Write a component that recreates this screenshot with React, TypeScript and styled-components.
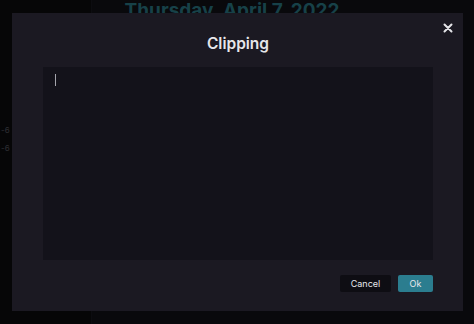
import React from "react";
import styled, { createGlobalStyle } from "styled-components";

const GlobalStyle = createGlobalStyle`
  html, body {
    margin: 0;
    padding: 0;
    background: #0b0b0e;
    font-family: Inter, "Liberation Sans", Arial, sans-serif;
  }
  * { box-sizing: border-box; }
`;

const Page = styled.div`
  position: relative;
  display: flex;
  width: 474px;
  height: 324px;
  overflow: hidden;
  background: #0c0c10;
`;

const Sidebar = styled.aside`
  display: flex;
  flex-direction: column;
  gap: 8px;
  width: 92px;
  padding-top: 125px;
  background: #08080a;
  border-right: 1px solid #111116;
`;

const TickLabel = styled.span`
  font-size: 8px;
  color: #3d3d44;
  padding-left: 1px;
`;

const Main = styled.main`
  flex: 1;
  display: flex;
  justify-content: center;
  padding-right: 102px;
`;

const DateTitle = styled.h1`
  margin: 0;
  margin-top: -1px;
  font-size: 19px;
  font-weight: 700;
  color: #1f5761;
  white-space: nowrap;
`;

const Overlay = styled.div`
  position: absolute;
  inset: 0;
  display: flex;
  align-items: flex-start;
  padding: 13px 11px 13px 12px;
  background: rgba(0, 0, 0, 0.25);
`;

const Modal = styled.div`
  position: relative;
  display: flex;
  flex-direction: column;
  width: 451px;
  height: 298px;
  padding: 21px 30px 18px 31px;
  background: #1b1922;
`;

const CloseBtn = styled.button`
  position: absolute;
  top: 5px;
  right: 5px;
  width: 20px;
  height: 20px;
  display: flex;
  align-items: center;
  justify-content: center;
  padding: 0;
  border: none;
  background: transparent;
  color: #e4e4e8;
  cursor: pointer;
`;

const Title = styled.h2`
  margin: 0 0 13px;
  text-align: center;
  font-size: 15.5px;
  font-weight: 600;
  color: #e6e6ea;
  line-height: 20px;
`;

const EditorWrap = styled.div`
  position: relative;
  width: 390px;
  height: 193px;
`;

const Editor = styled.textarea`
  width: 100%;
  height: 100%;
  resize: none;
  border: none;
  outline: none;
  padding: 7px 12px;
  background: #13121a;
  color: #d0d0d6;
  caret-color: #b8b8c0;
  font-family: inherit;
  font-size: 12px;
  line-height: 14px;
`;

const Caret = styled.span`
  position: absolute;
  top: 7px;
  left: 12px;
  width: 1px;
  height: 12px;
  background: #a4a4ac;
  pointer-events: none;
`;

const Footer = styled.div`
  display: flex;
  justify-content: flex-end;
  gap: 7px;
  margin-top: 15px;
`;

const Button = styled.button<{ $primary?: boolean }>`
  height: 17px;
  width: ${(p) => (p.$primary ? "35px" : "51px")};
  padding: 0;
  border: none;
  border-radius: 2px;
  font-family: inherit;
  font-size: 9px;
  color: #e8e8ec;
  background: ${(p) => (p.$primary ? "#2b7d8f" : "#0e0d13")};
  cursor: pointer;
`;

export default function App() {
  return (
    <>
      <GlobalStyle />
      <Page>
        <Sidebar>
          <TickLabel>-6</TickLabel>
          <TickLabel>-6</TickLabel>
        </Sidebar>
        <Main>
          <DateTitle>Thursday, April 7, 2022</DateTitle>
        </Main>
        <Overlay>
          <Modal>
            <CloseBtn aria-label="Close">
              <svg width="10" height="10" viewBox="0 0 10 10">
                <path d="M1.5 1.5 L8.5 8.5 M8.5 1.5 L1.5 8.5" stroke="currentColor" strokeWidth="2" strokeLinecap="round" />
              </svg>
            </CloseBtn>
            <Title>Clipping</Title>
            <EditorWrap>
              <Editor defaultValue="" />
              <Caret />
            </EditorWrap>
            <Footer>
              <Button>Cancel</Button>
              <Button $primary>Ok</Button>
            </Footer>
          </Modal>
        </Overlay>
      </Page>
    </>
  );
}
